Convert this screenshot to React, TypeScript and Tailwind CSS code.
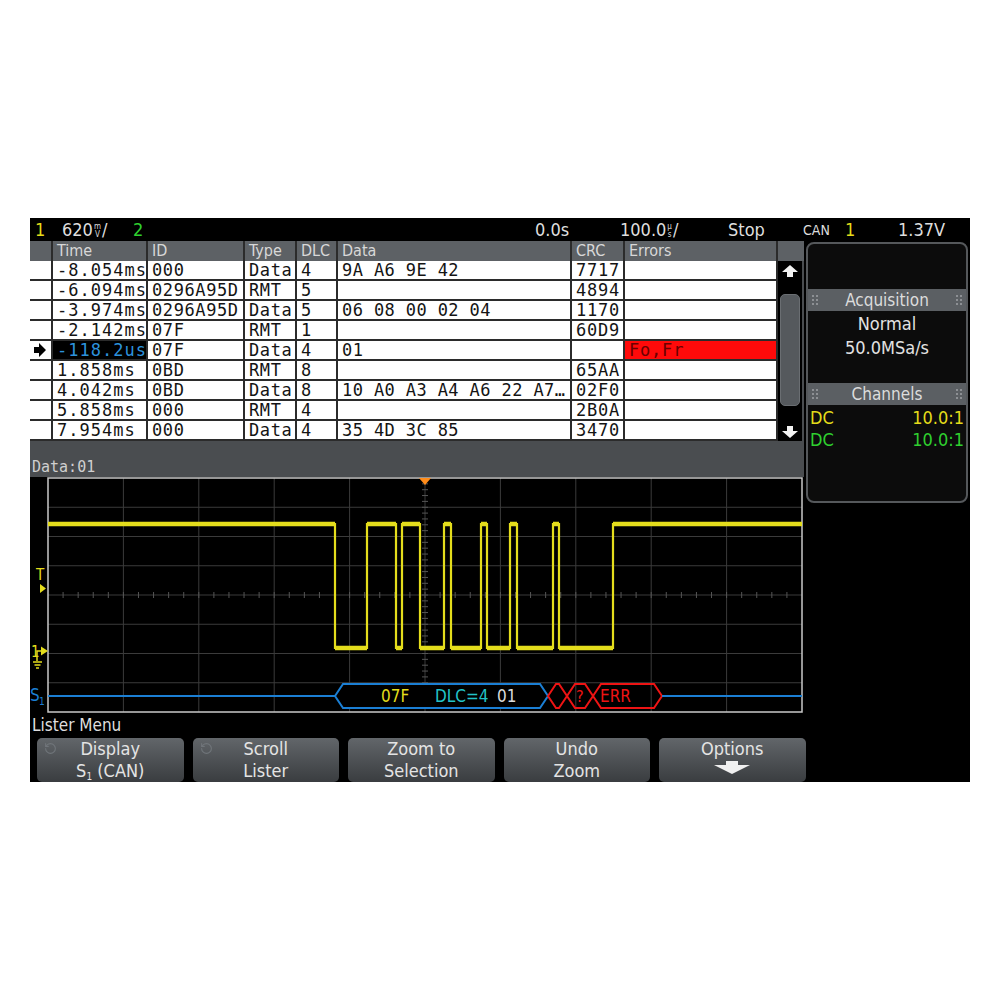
import React from "react";
import { RotateCcw } from "lucide-react";

// fonts used across the scope screen
const narrow = "font-['Liberation_Sans_Narrow','DejaVu_Sans_Condensed','Arial_Narrow',sans-serif]";
const mono = "font-['DejaVu_Sans_Mono','Liberation_Mono',monospace]";

type Frame = {
  t: string;
  id: string;
  type: string;
  dlc: string;
  data: string;
  crc: string;
  err?: string;
  sel?: boolean;
};

const frames: Frame[] = [
  { t: "-8.054ms", id: "000", type: "Data", dlc: "4", data: "9A A6 9E 42", crc: "7717" },
  { t: "-6.094ms", id: "0296A95D", type: "RMT", dlc: "5", data: "", crc: "4894" },
  { t: "-3.974ms", id: "0296A95D", type: "Data", dlc: "5", data: "06 08 00 02 04", crc: "1170" },
  { t: "-2.142ms", id: "07F", type: "RMT", dlc: "1", data: "", crc: "60D9" },
  { t: "-118.2us", id: "07F", type: "Data", dlc: "4", data: "01", crc: "", err: "Fo,Fr", sel: true },
  { t: "1.858ms", id: "0BD", type: "RMT", dlc: "8", data: "", crc: "65AA" },
  { t: "4.042ms", id: "0BD", type: "Data", dlc: "8", data: "10 A0 A3 A4 A6 22 A7…", crc: "02F0" },
  { t: "5.858ms", id: "000", type: "RMT", dlc: "4", data: "", crc: "2B0A" },
  { t: "7.954ms", id: "000", type: "Data", dlc: "4", data: "35 4D 3C 85", crc: "3470" },
];

// column widths of the lister table
const cols = [23, 95, 97, 52, 41, 234, 53, 153];
const heads = ["", "Time", "ID", "Type", "DLC", "Data", "CRC", "Errors"];
const tracks = ["tracking-[1px]", "tracking-[0.6px]", "tracking-[0.6px]", "tracking-[1px]", "tracking-[0.4px]", "tracking-[0.8px]", "tracking-[0.8px]"];

const Stacked = ({ top, bottom }: { top: string; bottom: string }) => (
  <span className="inline-flex flex-col items-center text-[8px] leading-[8px] mx-[1px] translate-y-[1px]">
    <span>{top}</span>
    <span>{bottom}</span>
  </span>
);

const TopBar = () => (
  <div className={`flex h-[23px] items-center text-[18px] leading-[22px] text-[#dedede] ${narrow}`}>
    <span className="w-[32px] pl-[5px] text-[#e4dc1a]">1</span>
    <span className="w-[71px] flex items-center">
      620<Stacked top="m" bottom="V" />/
    </span>
    <span className="w-[402px] text-[#2fd02f]">2</span>
    <span className="w-[85px]">0.0s</span>
    <span className="w-[108px] flex items-center">
      100.0<Stacked top="µ" bottom="s" />/
    </span>
    <span className="w-[75px]">Stop</span>
    <span className="w-[42px] text-[14px]">CAN</span>
    <span className="w-[53px] text-[#e4dc1a]">1</span>
    <span>1.37V</span>
  </div>
);

const RowArrow = () => (
  <svg width="14" height="14" viewBox="0 0 14 14">
    <polygon points="1,4 6,4 6,0 13,7 6,14 6,10 1,10" fill="#000" />
  </svg>
);

const ScrollArrow = ({ up }: { up?: boolean }) => (
  <div className="h-[19px] flex items-center justify-center bg-black">
    <svg width="18" height="14" viewBox="0 0 18 14" className={up ? "" : "rotate-180"}>
      <polygon points="9,1 17,8 12,8 12,13 6,13 6,8 1,8" fill="#f2f2f2" />
    </svg>
  </div>
);

const Lister = () => (
  <div className="bg-[#4a4d50] h-[236px] flex flex-col">
    {/* header */}
    <div className={`flex h-[20px] bg-[#5d6165] text-[16px] leading-[20px] text-[#d8d8d8] ${narrow}`}>
      {heads.map((h, i) => (
        <div
          key={i}
          style={{ width: cols[i] }}
          className="border-r-2 border-[#2b2b2b] pl-[4px] overflow-hidden whitespace-nowrap"
        >
          {h}
        </div>
      ))}
    </div>
    <div className="flex">
      <div className="flex flex-col">
        {frames.map((f, r) => {
          const cells = [f.t, f.id, f.type, f.dlc, f.data, f.crc, f.err ?? ""];
          return (
            <div key={r} className={`flex h-[20px] border-b-2 border-[#2b2b2b] text-[17px] leading-[18px] text-[#141414] ${mono}`}>
              <div style={{ width: cols[0] }} className="bg-white border-r-2 border-[#2b2b2b] flex items-center pl-[3px]">
                {f.sel && <RowArrow />}
              </div>
              {cells.map((c, i) => {
                let cls = "bg-white";
                if (f.sel && i === 0) cls = "bg-black text-[#2d92dc]";
                if (i === 6 && f.err) cls = "bg-[#ff0a0a] text-[#6a0000]";
                return (
                  <div
                    key={i}
                    style={{ width: cols[i + 1] }}
                    className={`${cls} ${tracks[i]} border-r-2 border-[#2b2b2b] pl-[4px] overflow-hidden whitespace-nowrap`}
                  >
                    {c}
                  </div>
                );
              })}
            </div>
          );
        })}
      </div>
      {/* scroll bar */}
      <div className="w-[24px] h-[180px] bg-black flex flex-col">
        <ScrollArrow up />
        <div className="flex-1 px-[2px] pt-[14px] pb-[16px]">
          <div className="h-full rounded-[5px] bg-[#55595d] border border-[#6a6e72]" />
        </div>
        <ScrollArrow />
      </div>
    </div>
    <div className={`mt-auto pl-[2px] text-[15px] leading-[20px] text-[#cfcfcf] ${mono}`}>Data:01</div>
  </div>
);

// waveform trace: high/low levels of the CAN frame on channel 1
const HI = 47;
const LO = 171;
const edges = [305, 337, 366, 372, 390, 414, 421, 451, 457, 480, 487, 523, 529, 583];

const tracePath = () => {
  let d = `M18 ${HI}`;
  let level = HI;
  edges.forEach((x) => {
    level = level === HI ? LO : HI;
    d += ` H${x} V${level}`;
  });
  return d + " H772";
};

// flat runs of the trace, drawn a little heavier than the edges
const levelRuns = () => {
  const xs = [18, ...edges, 772];
  let d = "";
  for (let i = 0; i < xs.length - 1; i++) {
    const y = i % 2 === 0 ? HI : LO;
    d += `M${xs[i]} ${y} H${xs[i + 1]} `;
  }
  return d;
};

const hexagon = (x1: number, x2: number, yc = 219, h = 12, s = 8) =>
  `M${x1} ${yc} L${x1 + s} ${yc - h} L${x2 - s} ${yc - h} L${x2} ${yc} L${x2 - s} ${yc + h} L${x1 + s} ${yc + h} Z`;

const Scope = () => {
  const left = 18;
  const right = 772;
  const top = 1;
  const bottom = 235;
  const dx = (right - left) / 10;
  const dy = (bottom - top) / 8;
  const midY = top + dy * 4;
  const midX = left + dx * 5;

  return (
    <svg width="774" height="236" viewBox="0 0 774 236" className={`block bg-black ${narrow}`}>
      {/* graticule */}
      {Array.from({ length: 9 }).map((_, i) => (
        <line key={`v${i}`} x1={left + dx * (i + 1)} y1={top} x2={left + dx * (i + 1)} y2={bottom} stroke="#3b3b3b" />
      ))}
      {Array.from({ length: 7 }).map((_, i) => (
        <line key={`h${i}`} x1={left} y1={top + dy * (i + 1)} x2={right} y2={top + dy * (i + 1)} stroke="#3b3b3b" />
      ))}
      {Array.from({ length: 49 }).map((_, i) => (
        <line key={`tx${i}`} x1={left + (dx / 5) * (i + 1)} y1={midY - 3} x2={left + (dx / 5) * (i + 1)} y2={midY + 3} stroke="#555" />
      ))}
      {Array.from({ length: 39 }).map((_, i) => (
        <line key={`ty${i}`} x1={midX - 3} y1={top + (dy / 5) * (i + 1)} x2={midX + 3} y2={top + (dy / 5) * (i + 1)} stroke="#555" />
      ))}
      <rect x={left} y={top} width={right - left} height={bottom - top} fill="none" stroke="#c9c9c9" strokeWidth="1.5" />

      {/* trigger position */}
      <polygon points={`${midX - 6},1 ${midX + 6},1 ${midX},8`} fill="#ff8c1a" />

      {/* channel 1 trace */}
      <path d={tracePath()} fill="none" stroke="#e4dd1c" strokeWidth="2.2" />
      <path d={levelRuns()} fill="none" stroke="#e4dd1c" strokeWidth="4.5" />

      {/* left edge markers */}
      <text x="6" y="103" fontSize="15" fill="#e4dd1c">T</text>
      <polygon points="10,107 16,111.5 10,116" fill="#e4dd1c" />
      <text x="1" y="180" fontSize="15" fill="#e4dd1c">1</text>
      <path d="M7 184 V174 H11" stroke="#e4dd1c" strokeWidth="1.5" fill="none" />
      <polygon points="11,169.5 18,174 11,178.5" fill="#e4dd1c" />
      <path d="M3 185 H12 M4.5 188 H10.5 M6 191 H9" stroke="#e4dd1c" strokeWidth="1.5" />
      <text x="0" y="224" fontSize="17" fill="#1b7fd4">S</text>
      <text x="9" y="228" fontSize="10" fill="#1b7fd4">1</text>

      {/* serial bus decode */}
      <line x1={left} y1="219" x2="305" y2="219" stroke="#1b7fd4" strokeWidth="2" />
      <path d={hexagon(305, 518)} fill="#000" stroke="#1b7fd4" strokeWidth="2" />
      <text x="351" y="225" fontSize="17" fill="#e4dd1c">07F</text>
      <text x="405" y="225" fontSize="17" fill="#22c2c8">DLC=4</text>
      <text x="467" y="225" fontSize="17" fill="#dcdcdc">01</text>
      <path d={hexagon(518, 537, 219, 12, 8)} fill="none" stroke="#ee1414" strokeWidth="2" />
      <path d={hexagon(537, 563)} fill="none" stroke="#ee1414" strokeWidth="2" />
      <path d={hexagon(563, 632)} fill="none" stroke="#ee1414" strokeWidth="2" />
      <text x="546" y="225" fontSize="16" fill="#ee1414">?</text>
      <text x="570" y="225" fontSize="17" fill="#ee1414">ERR</text>
      <line x1="632" y1="219" x2={right} y2="219" stroke="#1b7fd4" strokeWidth="2" />
    </svg>
  );
};

const Grip = () => (
  <div className="grid grid-cols-2 gap-[2px]">
    {Array.from({ length: 6 }).map((_, i) => (
      <span key={i} className="w-[2px] h-[2px] bg-[#8d9094]" />
    ))}
  </div>
);

const PanelHeader = ({ title }: { title: string }) => (
  <div className="h-[22px] bg-[#5b5f63] flex items-center justify-between px-[4px] text-[17px] leading-[22px] text-[#dcdcdc]">
    <Grip />
    <span>{title}</span>
    <Grip />
  </div>
);

const SidePanel = () => (
  <div className={`ml-[2px] mt-[1px] w-[162px] h-[261px] rounded-[8px] border-2 border-[#55585b] bg-[#0c0c0c] flex flex-col overflow-hidden ${narrow}`}>
    <div className="h-[45px] shrink-0" />
    <PanelHeader title="Acquisition" />
    <div className="h-[72px] flex flex-col items-center pt-[1px] text-[18px] leading-[24px] text-[#e2e2e2]">
      <span>Normal</span>
      <span>50.0MSa/s</span>
    </div>
    <PanelHeader title="Channels" />
    <div className="pt-[2px] px-[2px] text-[18px] leading-[22px]">
      <div className="flex justify-between text-[#e4dc1a]">
        <span>DC</span>
        <span>10.0:1</span>
      </div>
      <div className="flex justify-between text-[#2fd02f]">
        <span>DC</span>
        <span>10.0:1</span>
      </div>
    </div>
  </div>
);

type Key = { lines: React.ReactNode[]; icon?: boolean; arrow?: boolean };

const keys: Key[] = [
  { lines: ["Display", <>S<sub className="text-[10px]">1</sub> (CAN)</>], icon: true },
  { lines: ["Scroll", "Lister"], icon: true },
  { lines: ["Zoom to", "Selection"] },
  { lines: ["Undo", "Zoom"] },
  { lines: ["Options"], arrow: true },
];

const SoftKeys = () => (
  <div className={`flex gap-[9px] pl-[7px] ${narrow}`}>
    {keys.map((k, i) => (
      <div
        key={i}
        className="relative w-[146.5px] h-[44px] rounded-[5px] bg-gradient-to-b from-[#62666a] to-[#3a3d40] flex flex-col items-center text-[18px] leading-[22px] text-[#e4e4e4]"
      >
        {k.icon && <RotateCcw size={13} color="#70757a" className="absolute left-[7px] top-[4px]" />}
        {k.lines.map((l, j) => (
          <span key={j}>{l}</span>
        ))}
        {k.arrow && (
          <svg width="36" height="13" viewBox="0 0 36 13" className="mt-[1px]">
            <polygon points="12,0 24,0 24,4 36,4 18,13 0,4 12,4" fill="#f0f0f0" />
          </svg>
        )}
      </div>
    ))}
  </div>
);

const App = () => (
  <div className="w-[1000px] h-[1000px] bg-white pt-[218px] pl-[30px]">
    <div className="w-[940px] h-[564px] bg-black flex flex-col">
      <TopBar />
      <div className="flex">
        <div className="w-[774px] flex flex-col">
          <Lister />
          <Scope />
        </div>
        <SidePanel />
      </div>
      <div className={`h-[25px] pl-[2px] text-[17px] leading-[25px] text-[#dedede] ${narrow}`}>Lister Menu</div>
      <SoftKeys />
    </div>
  </div>
);

export default App;
